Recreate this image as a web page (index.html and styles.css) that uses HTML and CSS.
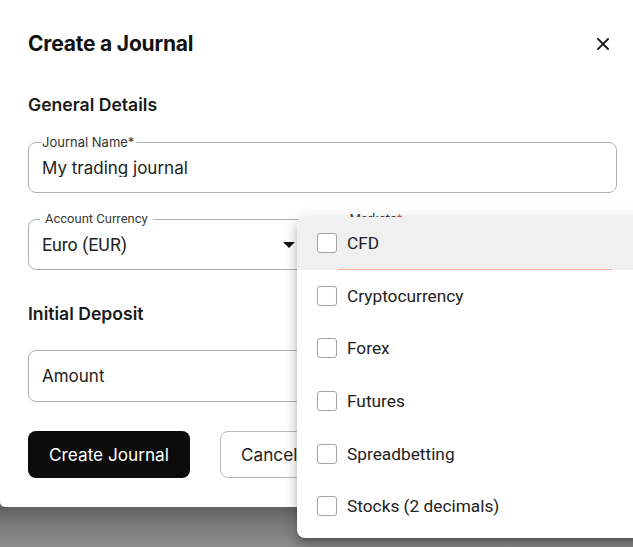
FILE: index.html
```html
<!DOCTYPE html>
<html lang="en">
<head>
<meta charset="utf-8">
<title>Create a Journal</title>
<link rel="stylesheet" href="styles.css">
</head>
<body>
  <div class="page">
    <div class="modal">
      <div class="modal-header">
        <h1 class="modal-title">Create a Journal</h1>
        <button class="close-btn" aria-label="Close">
          <svg width="12" height="12" viewBox="0 0 12 12"><path d="M1 1 L11 11 M11 1 L1 11" stroke="#1b1b1b" stroke-width="1.9" stroke-linecap="square"/></svg>
        </button>
      </div>

      <h2 class="section-title">General Details</h2>

      <fieldset class="field field-name">
        <legend class="field-legend">Journal Name*</legend>
        <span class="field-value">My trading journal</span>
      </fieldset>

      <div class="field-row">
        <fieldset class="field field-select">
          <legend class="field-legend legend-roboto">Account Currency</legend>
          <div class="select-line">
            <span class="field-value roboto">Euro (EUR)</span>
            <svg class="select-arrow" width="12" height="6" viewBox="0 0 12 6"><path d="M0 0 H12 L6 6 Z" fill="#111"/></svg>
          </div>
        </fieldset>
        <fieldset class="field field-select field-error">
          <legend class="field-legend legend-roboto">Markets<span class="req">*</span></legend>
          <div class="select-line">
            <span class="field-value roboto">&nbsp;</span>
          </div>
        </fieldset>
      </div>

      <h2 class="section-title deposit-title">Initial Deposit</h2>

      <div class="field-row">
        <div class="field field-plain">
          <span class="field-value">Amount</span>
        </div>
      </div>

      <div class="actions">
        <button class="btn btn-primary">Create Journal</button>
        <button class="btn btn-outline">Cancel</button>
      </div>
    </div>
    <div class="scrim"></div>
  </div>

  <ul class="menu" role="listbox">
    <li class="menu-item is-active"><span class="checkbox"></span>CFD</li>
    <li class="menu-item"><span class="checkbox"></span>Cryptocurrency</li>
    <li class="menu-item"><span class="checkbox"></span>Forex</li>
    <li class="menu-item"><span class="checkbox"></span>Futures</li>
    <li class="menu-item"><span class="checkbox"></span>Spreadbetting</li>
    <li class="menu-item"><span class="checkbox"></span>Stocks (2 decimals)</li>
  </ul>
</body>
</html>
```

FILE: styles.css
```css
* { box-sizing: border-box; }

html, body {
  margin: 0;
  height: 100%;
  overflow: hidden;
}

body {
  font-family: Inter, "Noto Sans", sans-serif;
  color: #141414;
  background: #636363;
  position: relative;
}

.page {
  display: flex;
  flex-direction: column;
  height: 100%;
}

/* dialog, wider than the window so its right edge runs off-screen */
.modal {
  width: 645px;
  flex: none;
  background: #fff;
  border-radius: 0 0 5px 5px;
  padding: 28px 28px 29px;
  position: relative;
  z-index: 1;
}

.scrim {
  flex: 1;
  background: linear-gradient(180deg, #5f5f5f 0%, #7a7a7a 45%, #8c8c8c 100%);
}

.modal-header {
  height: 32px;
  display: flex;
  align-items: center;
  justify-content: space-between;
}

.modal-title {
  margin: 0;
  font-size: 21px;
  line-height: 24px;
  font-weight: 700;
  letter-spacing: -0.2px;
  color: #111;
}

.close-btn {
  width: 28px;
  height: 28px;
  border: 0;
  padding: 0;
  background: none;
  display: flex;
  align-items: center;
  justify-content: center;
}

.section-title {
  margin: 33px 0 0;
  font-size: 17.6px;
  line-height: 24px;
  font-weight: 600;
  color: #1a1a1a;
}

.deposit-title { margin-top: 32px; }

/* outlined inputs with a notched label */
.field {
  margin: 0;
  min-width: 0;
  border: 1px solid #adb3b1;
  border-radius: 8px;
  padding: 0 13px 12px;
}

.field-name {
  margin-top: 17px;
  padding-bottom: 15px;
}

.field-legend {
  font-size: 13px;
  line-height: 16px;
  color: #333;
  padding: 0 2px 0 0;
  margin-left: 0;
}

.legend-roboto {
  font-family: Roboto, sans-serif;
  margin-left: -2px;
  padding: 0 5px;
  color: #3a3a3a;
}

.req { color: #e2463a; }

.field-value {
  display: block;
  font-size: 17px;
  line-height: 24px;
  color: #222;
  margin-top: 6px;
}

/* the input box clips the tails of the glyphs */
.field-name .field-value {
  height: 21px;
  overflow: hidden;
}

.roboto {
  font-family: Roboto, sans-serif;
  font-size: 17.8px;
}

.field-row {
  display: grid;
  grid-template-columns: 1fr 1fr;
  gap: 20px;
  margin-top: 18px;
}

.select-line {
  display: flex;
  align-items: center;
  justify-content: space-between;
}

.select-arrow {
  margin-right: 4px;
  margin-top: 6px;
}

.field-error {
  border-color: #f4bdb2;
}

.field-plain {
  margin-top: 6px;
  height: 52px;
  display: flex;
  align-items: center;
  padding: 0 13px;
}

.field-plain .field-value { margin-top: 0; }

.actions {
  display: flex;
  gap: 30px;
  margin-top: 29px;
}

.btn {
  height: 47px;
  border-radius: 8px;
  font-family: Inter, sans-serif;
  font-size: 17.2px;
  padding: 0 20px;
}

.btn-primary {
  background: #0b0b0b;
  color: #fff;
  border: 0;
  width: 162px;
  padding: 0;
}

.btn-outline {
  background: #fff;
  color: #1c1c1c;
  border: 1px solid #b6bbba;
  width: 140px;
  text-align: left;
}

/* multi-select dropdown panel, floats over the dialog */
.menu {
  position: absolute;
  left: 297px;
  top: 217px;
  z-index: 5;
  width: 360px;
  margin: 0;
  padding: 0 0 5px;
  list-style: none;
  background: #fff;
  border-radius: 8px;
  box-shadow: 0 5px 5px -3px rgba(0,0,0,.2), 0 8px 10px 1px rgba(0,0,0,.14), 0 3px 14px 2px rgba(0,0,0,.12);
  font-family: Roboto, sans-serif;
}

.menu-item {
  height: 52.6px;
  display: flex;
  align-items: center;
  padding-left: 20px;
  font-size: 17.3px;
  color: #222;
  position: relative;
}

.menu-item.is-active {
  background: #f0f0f0;
  border-radius: 8px 0 0 0;
}

.menu-item.is-active::after {
  content: "";
  position: absolute;
  left: 41px;
  width: 274px;
  bottom: 0;
  height: 1px;
  background: #f5b3a5;
}

.checkbox {
  width: 20px;
  height: 20px;
  border: 1px solid #a3a3a3;
  border-radius: 3px;
  background: #fff;
  margin-right: 10px;
  flex: none;
}
```
